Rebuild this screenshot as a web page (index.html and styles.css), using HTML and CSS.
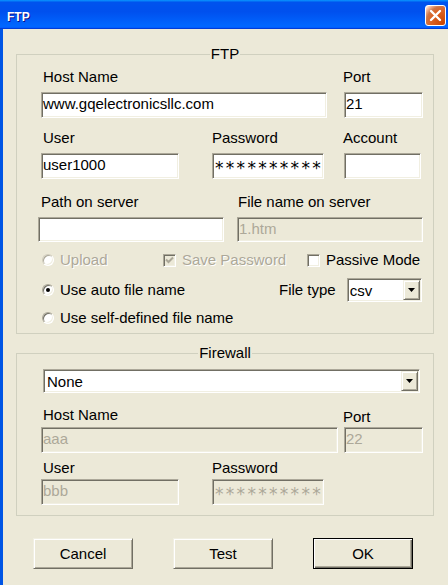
FILE: index.html
```html
<!DOCTYPE html>
<html lang="en">
<head>
<meta charset="utf-8">
<title>FTP</title>
<link rel="stylesheet" href="styles.css">
</head>
<body>
<div class="window">
  <div class="titlebar">
    <span class="title">FTP</span>
    <div class="close">
      <svg width="19" height="19" viewBox="0 0 19 19"><path d="M5 5 L14 14 M14 5 L5 14" stroke="#fff" stroke-width="2.4" stroke-linecap="round"/></svg>
    </div>
  </div>
  <div class="client">
    <div class="group ftp">
      <div class="legend">FTP</div>
      <div class="row r1">
        <div class="col c-host"><div class="lbl">Host Name</div><div class="field">www.gqelectronicsllc.com</div></div>
        <div class="col c-port"><div class="lbl lbl-n1">Port</div><div class="field">21</div></div>
      </div>
      <div class="row r2">
        <div class="col c-user"><div class="lbl">User</div><div class="field">user1000</div></div>
        <div class="col c-pass"><div class="lbl lbl-0">Password</div><div class="field pw">**********</div></div>
        <div class="col c-acct"><div class="lbl lbl-n1">Account</div><div class="field"></div></div>
      </div>
      <div class="row r3">
        <div class="col c-path"><div class="lbl lbl-3">Path on server</div><div class="field f25"></div></div>
        <div class="col c-file"><div class="lbl lbl-1">File name on server</div><div class="field f25 disabled">1.htm</div></div>
      </div>
      <div class="opt o1">
        <div class="item i-upload gray"><span class="radio dis"></span>Upload</div>
        <div class="item i-save gray"><span class="check dis"><svg width="9" height="9" viewBox="0 0 9 9"><polyline points="1,3.5 3.5,6 8,1.5" fill="none" stroke="#aca899" stroke-width="2"/></svg></span>Save Password</div>
        <div class="item"><span class="check"></span>Passive Mode</div>
      </div>
      <div class="opt o2">
        <div class="item i-auto"><span class="radio"><span class="dot"></span></span>Use auto file name</div>
        <div class="item">File type</div>
        <div class="combo c-type"><div class="val">csv</div><div class="drop"><svg width="7" height="4" viewBox="0 0 7 4"><polygon points="0,0 7,0 3.5,4" fill="#000"/></svg></div></div>
      </div>
      <div class="opt o3">
        <div class="item"><span class="radio"></span>Use self-defined file name</div>
      </div>
    </div>

    <div class="group fw">
      <div class="legend">Firewall</div>
      <div class="combo c-fw"><div class="val">None</div><div class="drop"><svg width="7" height="4" viewBox="0 0 7 4"><polygon points="0,0 7,0 3.5,4" fill="#000"/></svg></div></div>
      <div class="row fr1">
        <div class="col c-fhost"><div class="lbl">Host Name</div><div class="field disabled">aaa</div></div>
        <div class="col c-fport"><div class="lbl lbl-n1 lbl-low">Port</div><div class="field disabled">22</div></div>
      </div>
      <div class="row fr2">
        <div class="col c-user"><div class="lbl">User</div><div class="field disabled">bbb</div></div>
        <div class="col c-pass"><div class="lbl lbl-0">Password</div><div class="field pw disabled">**********</div></div>
      </div>
    </div>

    <div class="buttons">
      <div class="btn">Cancel</div>
      <div class="btn">Test</div>
      <div class="btn default">OK</div>
    </div>
  </div>
</div>
</body>
</html>
```

FILE: styles.css
```css
html, body {
  margin: 0;
  padding: 0;
}
body {
  width: 448px;
  height: 585px;
  overflow: hidden;
  background: #ece9d8;
  font-family: "Liberation Sans", Arial, sans-serif;
  font-size: 15px;
  line-height: 18px;
  color: #000;
}
.window {
  width: 448px;
  height: 585px;
}
.titlebar {
  box-sizing: border-box;
  height: 29px;
  display: flex;
  justify-content: space-between;
  align-items: flex-start;
  padding: 5px 2px 0 7px;
  background: linear-gradient(180deg, #0997ff 0%, #0053ee 8%, #0050ee 40%, #0066ff 88%, #0066ff 93%, #005bff 95%, #003dd7 96%, #003dd7 100%);
}
.title {
  margin-top: 6px;
  font-weight: bold;
  font-size: 12px;
  line-height: 12px;
  color: #fff;
  text-shadow: 1px 1px #0f1089;
}
.close {
  box-sizing: border-box;
  width: 21px;
  height: 21px;
  border: 1px solid #fff;
  border-radius: 3px;
  display: flex;
  align-items: center;
  justify-content: center;
  background: radial-gradient(circle at 90% 90%, #cc4600 0%, #dc6527 55%, #cd7546 70%, #ffccb2 90%, #fff 100%);
}
.client {
  box-sizing: border-box;
  height: 556px;
  border-left: 3px solid #0055e5;
  padding-top: 25px;
}
.group {
  width: 416px;
  margin-left: 13px;
  border: 1px solid #d0d0bf;
}
.ftp {
  padding-bottom: 6px;
}
.fw {
  margin-top: 19px;
  padding-bottom: 10px;
}
.legend {
  width: max-content;
  margin: -9px auto 0;
  padding: 0 1px;
  line-height: 16px;
  background: #ece9d8;
}
.row {
  display: flex;
  align-items: flex-start;
}
.col {
  display: flex;
  flex-direction: column;
  gap: 6px;
}
.lbl {
  padding-left: 2px;
  white-space: nowrap;
}
.lbl-0 { padding-left: 0; }
.lbl-1 { padding-left: 1px; }
.lbl-3 { padding-left: 3px; }
.lbl-n1 { padding-left: 0; margin-left: -1px; }

.field {
  box-sizing: border-box;
  height: 26px;
  padding: 2px 0 0 1px;
  background: #fff;
  border: 1px solid;
  border-color: #aca899 #fff #fff #aca899;
  box-shadow: inset 1px 1px #716f64, inset -1px -1px #f1efe2;
  white-space: nowrap;
  overflow: hidden;
}
.f25 { height: 25px; }
.field.disabled {
  background: #ece9d8;
  color: #aca899;
}
.pw {
  font-family: "DejaVu Sans", sans-serif;
  font-weight: 400;
  font-size: 17px;
  line-height: 18px;
  letter-spacing: 2.3px;
  padding: 5px 0 0 2px;
}

.r1 { margin-top: 6px; }
.c-host { margin-left: 24px; width: 286px; }
.c-port { margin-left: 17px; width: 79px; }
.r2 { margin-top: 11px; }
.c-user { margin-left: 24px; width: 138px; }
.c-pass { margin-left: 33px; width: 112px; }
.c-acct { margin-left: 20px; width: 77px; }
.r3 { margin-top: 14px; }
.c-path { margin-left: 21px; width: 186px; }
.c-file { margin-left: 13px; width: 186px; }

.opt {
  display: flex;
  align-items: center;
  padding-left: 25px;
}
.o1 { margin-top: 9px; height: 18px; }
.o2 { margin-top: 9px; height: 24px; }
.o3 { margin-top: 7px; height: 18px; }
.item {
  display: flex;
  align-items: center;
  gap: 6px;
  white-space: nowrap;
}
.i-upload { width: 122px; }
.i-save { width: 144px; margin-left: -1px; }
.i-auto { width: 237px; }
.gray {
  color: #aca899;
  text-shadow: 1px 1px #fff;
}
.radio {
  box-sizing: border-box;
  width: 12px;
  height: 12px;
  flex-shrink: 0;
  border-radius: 50%;
  background: #fff;
  border: 1px solid;
  border-color: #aca899 #fff #fff #aca899;
  box-shadow: inset 1px 1px #716f64, inset -1px -1px #f1efe2;
  display: flex;
  align-items: center;
  justify-content: center;
  margin-top: -1px;
}
.radio.dis {
  border-color: #d0ccbc #fff #fff #d0ccbc;
  box-shadow: inset 1px 1px #aca899, inset -1px -1px #f1efe2;
}
.dot {
  width: 4px;
  height: 4px;
  border-radius: 50%;
  background: #000;
}
.check {
  box-sizing: border-box;
  width: 13px;
  height: 13px;
  flex-shrink: 0;
  background: #fff;
  border: 1px solid;
  border-color: #aca899 #fff #fff #aca899;
  box-shadow: inset 1px 1px #716f64, inset -1px -1px #f1efe2;
  display: flex;
  align-items: center;
  justify-content: center;
}
.check.dis {
  background: #ece9d8;
}

.combo {
  box-sizing: border-box;
  height: 24px;
  display: flex;
  padding: 2px;
  background: #fff;
  border: 1px solid;
  border-color: #aca899 #fff #fff #aca899;
  box-shadow: inset 1px 1px #716f64, inset -1px -1px #f1efe2;
}
.combo .val {
  flex: 1;
  line-height: 19px;
  padding-left: 0;
}
.drop {
  box-sizing: border-box;
  width: 17px;
  height: 20px;
  margin: -1px -1px 0 0;
  background: #ece9d8;
  border: 1px solid;
  border-color: #f1efe2 #716f64 #716f64 #f1efe2;
  box-shadow: inset 1px 1px #fff, inset -1px -1px #aca899;
  display: flex;
  align-items: center;
  justify-content: center;
}
.c-type { margin-left: 11px; width: 75px; }
.c-fw { margin: 8px 0 0 26px; width: 377px; }
.c-fw .val { padding-left: 1px; }

.fr1 { margin-top: 13px; }
.fr1 .col { gap: 3px; }
.c-fhost { margin-left: 24px; width: 297px; }
.c-fport { margin-left: 6px; width: 79px; }
.lbl-low { margin-top: 2px; margin-bottom: -2px; }
.fr2 { margin-top: 6px; }
.fr2 .col { gap: 2px; }

.buttons {
  display: flex;
  gap: 40px;
  margin: 22px 0 0 30px;
}
.btn {
  box-sizing: border-box;
  width: 100px;
  height: 31px;
  display: flex;
  align-items: center;
  justify-content: center;
  background: #ece9d8;
  border: 1px solid;
  border-color: #f1efe2 #716f64 #716f64 #f1efe2;
  box-shadow: inset 1px 1px #fff, inset -1px -1px #aca899;
}
.btn.default {
  border-color: #000;
  box-shadow: inset 1px 1px #fff, inset -1px -1px #716f64, inset -2px -2px #aca899;
}
```
